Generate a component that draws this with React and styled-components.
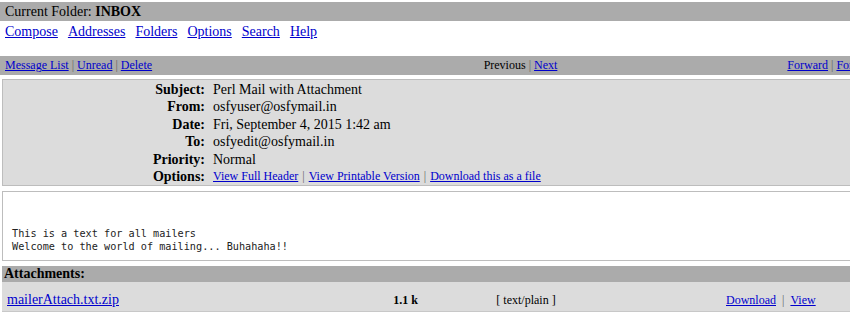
import React from 'react';
import styled, { createGlobalStyle } from 'styled-components';

const Global = createGlobalStyle`
  html, body { margin: 0; padding: 0; background: #fff; overflow: hidden; }
  body {
    font-family: "Liberation Serif", "Times New Roman", serif;
    font-size: 14px;
    color: #000;
  }
`;

const Page = styled.div`
  width: 1040px;
  padding-top: 2px;
`;

const TitleBar = styled.div`
  background: #ababab;
  height: 19px;
  line-height: 19px;
  padding-left: 5px;
  font-size: 14px;
`;

const Link = styled.a`
  color: #0000cc;
  text-decoration: underline;
  cursor: pointer;
  font-size: ${(p) => (p.$small ? '12px' : 'inherit')};
`;

const MenuRow = styled.nav`
  display: flex;
  gap: 10px;
  height: 33px;
  padding: 2px 0 0 5px;
  line-height: 17px;
  font-size: 14px;
`;

const NavBar = styled.div`
  display: grid;
  grid-template-columns: 1fr auto 1fr;
  background: #ababab;
  height: 19px;
  line-height: 19px;
  font-size: 12px;
  padding: 0 4px 0 5px;
`;

const NavCell = styled.div`
  text-align: ${(p) => p.$align || 'left'};
  white-space: nowrap;
  padding-left: ${(p) => p.$pl || 0}px;
`;

const Sep = styled.span`
  color: #666;
  padding: 0 ${(p) => p.$pad || 3}px;
`;

const HeaderBox = styled.div`
  margin: 4px 0 0 2px;
  border: 1px solid #bdbdbd;
  background: #dcdcdc;
  display: grid;
  grid-template-columns: 202px 1fr;
  column-gap: 8px;
  padding-top: 1px;
  line-height: 17.4px;
`;

const Label = styled.div`
  text-align: right;
  font-weight: bold;
`;

const Value = styled.div`
  white-space: nowrap;
`;

const SmallLinks = styled.div`
  font-size: 12px;
  white-space: nowrap;
`;

const BodyBox = styled.div`
  margin: 5px 0 0 2px;
  border: 1px solid #bdbdbd;
  background: #fff;
  padding: 35px 8px 7px 9px;
`;

const Pre = styled.pre`
  margin: 0;
  font-family: "DejaVu Sans Mono", "Liberation Mono", monospace;
  font-size: 10.2px;
  line-height: 13px;
  color: #222;
`;

const AttachHead = styled.div`
  margin: 5px 0 0 2px;
  background: #ababab;
  height: 16px;
  line-height: 16px;
  font-weight: bold;
  padding-left: 2px;
`;

const AttachRow = styled.div`
  margin-left: 2px;
  background: #dcdcdc;
  border-bottom: 1px solid #c8c8c8;
  display: grid;
  grid-template-columns: 298px 118px 216px 90px 1fr;
  align-items: baseline;
  padding: 9px 0 2px;
  line-height: 17px;
`;

const AttachCell = styled.div`
  text-align: ${(p) => p.$align || 'left'};
  padding-left: ${(p) => p.$pl || 0}px;
  font-size: ${(p) => (p.$small ? '12px' : '14px')};
  font-weight: ${(p) => (p.$bold ? 'bold' : 'normal')};
  white-space: nowrap;
`;

const headers = [
  ['Subject:', 'Perl Mail with Attachment'],
  ['From:', 'osfyuser@osfymail.in'],
  ['Date:', 'Fri, September 4, 2015 1:42 am'],
  ['To:', 'osfyedit@osfymail.in'],
  ['Priority:', 'Normal'],
];

export default function App() {
  return (
    <Page>
      <Global />
      <TitleBar>
        Current Folder: <b>INBOX</b>
      </TitleBar>
      <MenuRow>
        {['Compose', 'Addresses', 'Folders', 'Options', 'Search', 'Help'].map((l) => (
          <Link key={l}>{l}</Link>
        ))}
      </MenuRow>
      <NavBar>
        <NavCell>
          <Link>Message List</Link>
          <Sep>|</Sep>
          <Link>Unread</Link>
          <Sep>|</Sep>
          <Link>Delete</Link>
        </NavCell>
        <NavCell $align="center">
          Previous<Sep>|</Sep>
          <Link>Next</Link>
        </NavCell>
        <NavCell $pl={230}>
          <Link>Forward</Link>
          <Sep>|</Sep>
          <Link>Forward as Attachment</Link>
        </NavCell>
      </NavBar>
      <HeaderBox>
        {headers.map(([k, v]) => (
          <React.Fragment key={k}>
            <Label>{k}</Label>
            <Value>{v}</Value>
          </React.Fragment>
        ))}
        <Label>Options:</Label>
        <SmallLinks>
          <Link>View Full Header</Link>
          <Sep $pad={4}>|</Sep>
          <Link>View Printable Version</Link>
          <Sep $pad={4}>|</Sep>
          <Link>Download this as a file</Link>
        </SmallLinks>
      </HeaderBox>
      <BodyBox>
        <Pre>{'This is a text for all mailers\nWelcome to the world of mailing... Buhahaha!!'}</Pre>
      </BodyBox>
      <AttachHead>Attachments:</AttachHead>
      <AttachRow>
        <AttachCell $pl={5}>
          <Link>mailerAttach.txt.zip</Link>
        </AttachCell>
        <AttachCell $align="right" $small $bold>1.1 k</AttachCell>
        <AttachCell $align="center" $small>[ text/plain ]</AttachCell>
        <AttachCell />
        <AttachCell $small $pl={2}>
          <Link>Download</Link>
          <Sep $pad={6}>|</Sep>
          <Link>View</Link>
        </AttachCell>
      </AttachRow>
    </Page>
  );
}
